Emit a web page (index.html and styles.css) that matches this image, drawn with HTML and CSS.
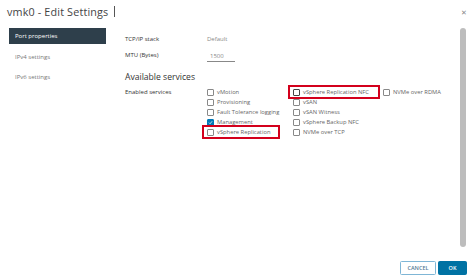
FILE: index.html
```html
<!DOCTYPE html>
<html>
<head>
<meta charset="utf-8">
<link rel="stylesheet" href="styles.css">
</head>
<body>
<div class="dialog">
  <div class="header">
    <div class="title">vmk0 - Edit Settings<span class="bar"></span></div>
    <div class="close">&#x2715;</div>
  </div>
  <div class="main">
    <div class="sidebar">
      <div class="nav active">Port properties</div>
      <div class="nav">IPv4 settings</div>
      <div class="nav">IPv6 settings</div>
    </div>
    <div class="content">
      <div class="field"><span class="label">TCP/IP stack</span><span class="value">Default</span></div>
      <div class="field"><span class="label">MTU (Bytes)</span><span class="value input">1500</span></div>
      <div class="section">Available services</div>
      <div class="services">
        <span class="label">Enabled services</span>
        <div class="col c1">
          <div class="svc"><span class="cb"></span>vMotion</div>
          <div class="svc"><span class="cb"></span>Provisioning</div>
          <div class="svc"><span class="cb"></span>Fault Tolerance logging</div>
          <div class="svc"><span class="cb checked"><svg viewBox="0 0 8 8" width="7" height="7"><path d="M1.5 4.2 L3.3 6 L6.6 2" fill="none" stroke="#fff" stroke-width="1.2"/></svg></span>Management</div>
          <div class="svc hl hl1"><span class="cb"></span>vSphere Replication</div>
        </div>
        <div class="col c2">
          <div class="svc hl hl2"><span class="cb dark"></span>vSphere Replication NFC</div>
          <div class="svc"><span class="cb"></span>vSAN</div>
          <div class="svc"><span class="cb"></span>vSAN Witness</div>
          <div class="svc"><span class="cb"></span>vSphere Backup NFC</div>
          <div class="svc"><span class="cb"></span>NVMe over TCP</div>
        </div>
        <div class="col c3">
          <div class="svc"><span class="cb"></span>NVMe over RDMA</div>
        </div>
      </div>
    </div>
    <div class="scroll"><div class="thumb"></div></div>
  </div>
  <div class="footer">
    <button class="btn cancel">CANCEL</button>
    <button class="btn ok">OK</button>
  </div>
</div>
</body>
</html>
```
FILE: styles.css
```css
* { box-sizing: border-box; }
html, body { margin: 0; padding: 0; background: #fff; }
body { width: 474px; height: 278px; overflow: hidden; font-family: "Open Sans", "Noto Sans", sans-serif; color: #333; }
.dialog { display: flex; flex-direction: column; height: 278px; }
.header { display: flex; justify-content: space-between; align-items: flex-start; padding: 3px 7px 0 7px; height: 28px; }
.title { display: flex; align-items: center; font-family: "Open Sans", "Noto Sans", sans-serif; font-size: 10.8px; color: #444; letter-spacing: 0.15px; line-height: 17px; }
.bar { display: inline-block; width: 1px; height: 11px; background: #555; margin-left: 6px; }
.close { font-size: 7px; color: #888; margin-top: 5px; }
.main { display: flex; flex: 1; }
.sidebar { width: 97px; margin-left: 9px; display: flex; flex-direction: column; }
.nav { height: 16px; line-height: 16px; font-size: 6px; color: #777; padding-left: 6px; margin-bottom: 4.5px; }
.active { background: #2e3f4b; color: #fff; }
.content { flex: 1; margin-left: 19px; padding-top: 3px; }
.field { display: flex; height: 16px; align-items: center; font-size: 6px; }
.label { width: 82px; font-size: 6px; color: #333; }
.value { color: #888; }
.input { width: 28px; padding-left: 3px; border-bottom: 1px solid #888; line-height: 9px; margin-top: 4px; }
.section { font-size: 8.6px; color: #333; margin-top: 7px; height: 14px; line-height: 14px; }
.services { display: flex; margin-top: 3px; font-size: 5.8px; }
.services .label { padding-top: 1px; }
.col { display: flex; flex-direction: column; }
.c1 { width: 86px; }
.c2 { width: 90px; }
.svc { display: flex; align-items: center; height: 10px; color: #666; white-space: nowrap; }
.cb { width: 7px; height: 7px; border: 1px solid #888; border-radius: 1px; margin-right: 3px; flex: none; display: flex; align-items: center; justify-content: center; }
.cb.dark { border-color: #444; }
.checked { background: #0079b8; border-color: #0079b8; }
.hl { outline: 2px solid #d3001c; }
.hl1 { margin-left: -3px; padding-left: 3px; width: 74px; }
.hl2 { margin-left: -3px; padding-left: 3px; width: 88px; }
.scroll { width: 6px; margin-right: 8px; margin-top: 0px; }
.thumb { width: 6px; height: 219px; background: #bdbdbd; border-radius: 3px; }
.footer { display: flex; justify-content: flex-end; gap: 2px; padding: 0 7px 3px 0; }
.btn { height: 14px; font-family: "Open Sans", sans-serif; font-size: 5.5px; font-weight: 600; border-radius: 1.5px; padding: 0; }
.cancel { width: 36px; background: #fff; border: 1px solid #7fb6d6; color: #557a94; }
.ok { width: 29px; background: #0072a3; border: 1px solid #0072a3; color: #fff; }
```
